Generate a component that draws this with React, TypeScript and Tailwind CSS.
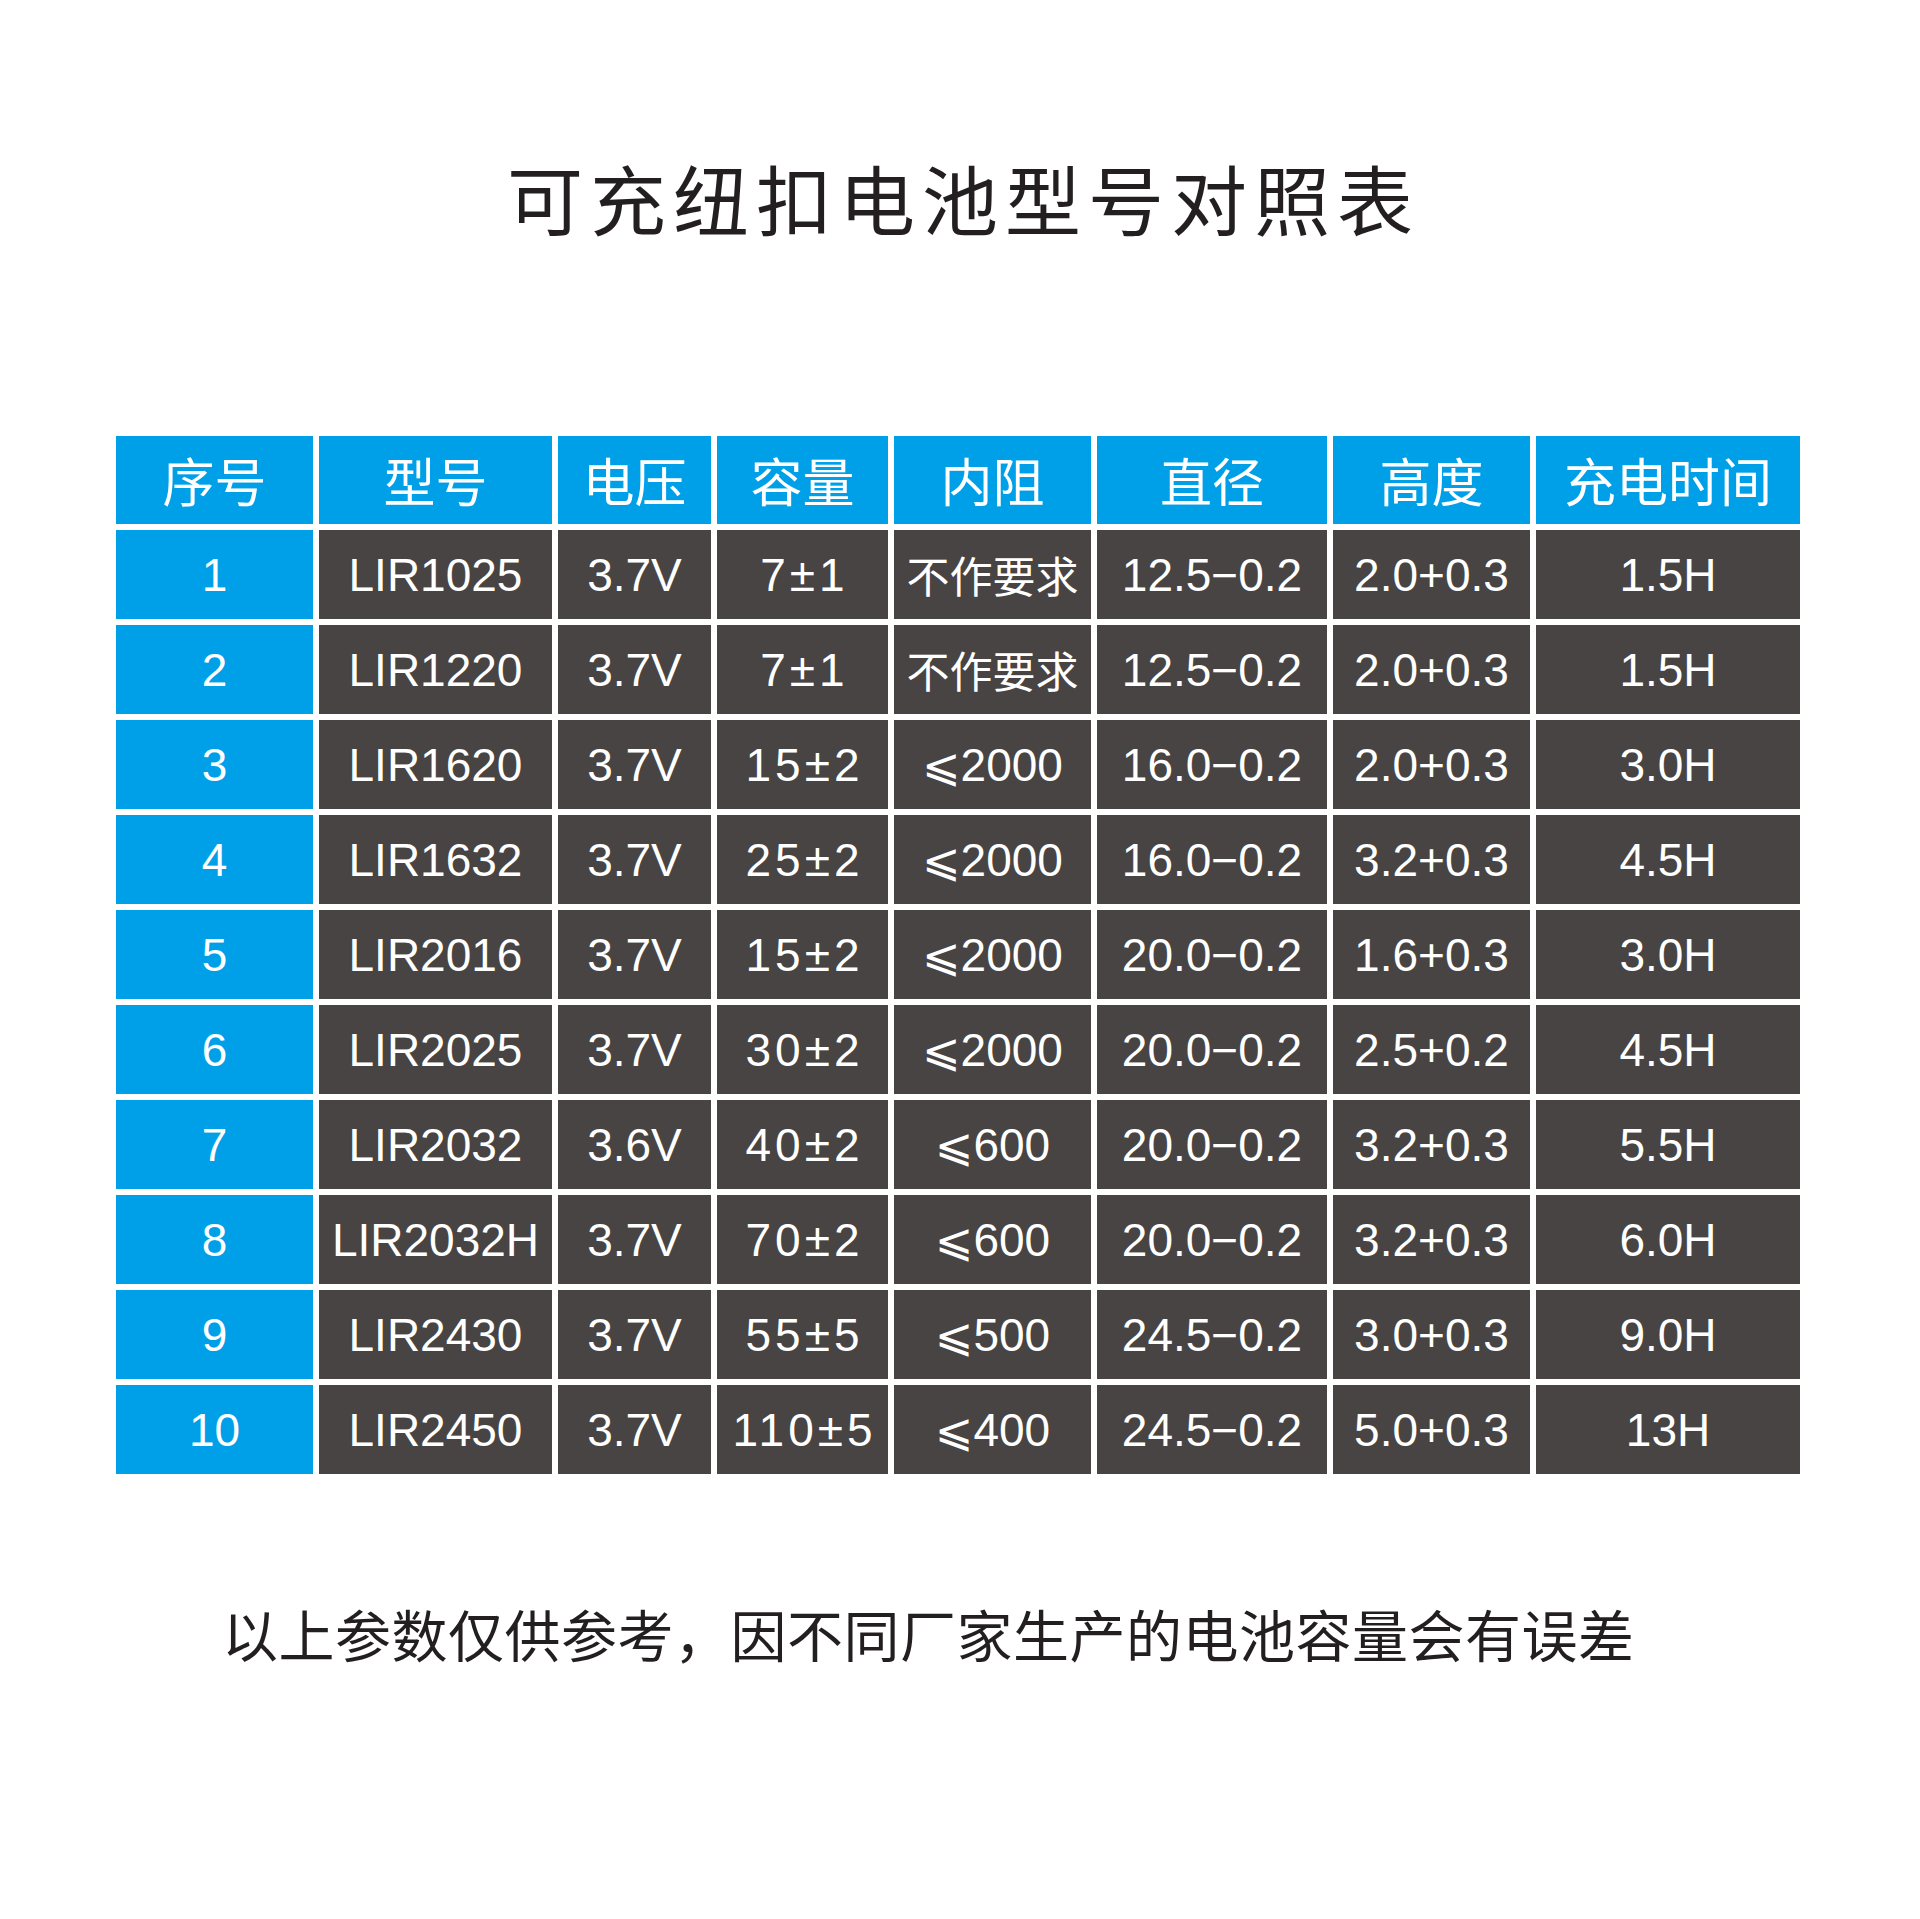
// Rechargeable coin cell battery model comparison chart

const headers = ['序号', '型号', '电压', '容量', '内阻', '直径', '高度', '充电时间']

const rows: string[][] = [
  ['1', 'LIR1025', '3.7V', '7±1', '不作要求', '12.5−0.2', '2.0+0.3', '1.5H'],
  ['2', 'LIR1220', '3.7V', '7±1', '不作要求', '12.5−0.2', '2.0+0.3', '1.5H'],
  ['3', 'LIR1620', '3.7V', '15±2', '⩽2000', '16.0−0.2', '2.0+0.3', '3.0H'],
  ['4', 'LIR1632', '3.7V', '25±2', '⩽2000', '16.0−0.2', '3.2+0.3', '4.5H'],
  ['5', 'LIR2016', '3.7V', '15±2', '⩽2000', '20.0−0.2', '1.6+0.3', '3.0H'],
  ['6', 'LIR2025', '3.7V', '30±2', '⩽2000', '20.0−0.2', '2.5+0.2', '4.5H'],
  ['7', 'LIR2032', '3.6V', '40±2', '⩽600', '20.0−0.2', '3.2+0.3', '5.5H'],
  ['8', 'LIR2032H', '3.7V', '70±2', '⩽600', '20.0−0.2', '3.2+0.3', '6.0H'],
  ['9', 'LIR2430', '3.7V', '55±5', '⩽500', '24.5−0.2', '3.0+0.3', '9.0H'],
  ['10', 'LIR2450', '3.7V', '110±5', '⩽400', '24.5−0.2', '5.0+0.3', '13H'],
]

export default function App() {
  return (
    <div className="w-[1920px] h-[1919px] bg-white flex flex-col font-['Noto_Sans_CJK_SC','Noto_Sans',sans-serif]">
      {/* Title */}
      <h1 className="mt-[159px] pl-[7px] text-center text-[76px] leading-none font-normal tracking-[7px] text-[#231f20]">
        可充纽扣电池型号对照表
      </h1>

      {/* Table */}
      <div className="mt-[201px] ml-[116px] grid grid-cols-[197px_233px_153px_171px_197px_230px_197px_264px] gap-[6px]">
        {headers.map((h) => (
          <div
            key={h}
            className="h-[88px] bg-[#00a0e9] text-white flex items-center justify-center text-[52px] leading-none"
          >
            {h}
          </div>
        ))}

        {rows.map((row) =>
          row.map((cell, i) => {
            const isCjk = /[\u4e00-\u9fff]/.test(cell)
            return (
              <div
                key={row[0] + '-' + i}
                className={`h-[89px] flex items-center justify-center text-white leading-none whitespace-nowrap ${
                  i === 0 ? 'bg-[#00a0e9]' : 'bg-[#474443]'
                } ${
                  isCjk
                    ? 'text-[43px]'
                    : "text-[46px] font-['Liberation_Sans','DejaVu_Sans','Noto_Sans_CJK_SC',sans-serif]"
                } ${i === 3 ? 'tracking-[4px] pl-[4px]' : ''}`}
              >
                {cell}
              </div>
            )
          })
        )}
      </div>

      {/* Footnote */}
      <p className="mt-[131px] pl-[222px] text-[56px] leading-none tracking-[0.5px] text-[#231f20]">
        以上参数仅供参考，因不同厂家生产的电池容量会有误差
      </p>
    </div>
  )
}
